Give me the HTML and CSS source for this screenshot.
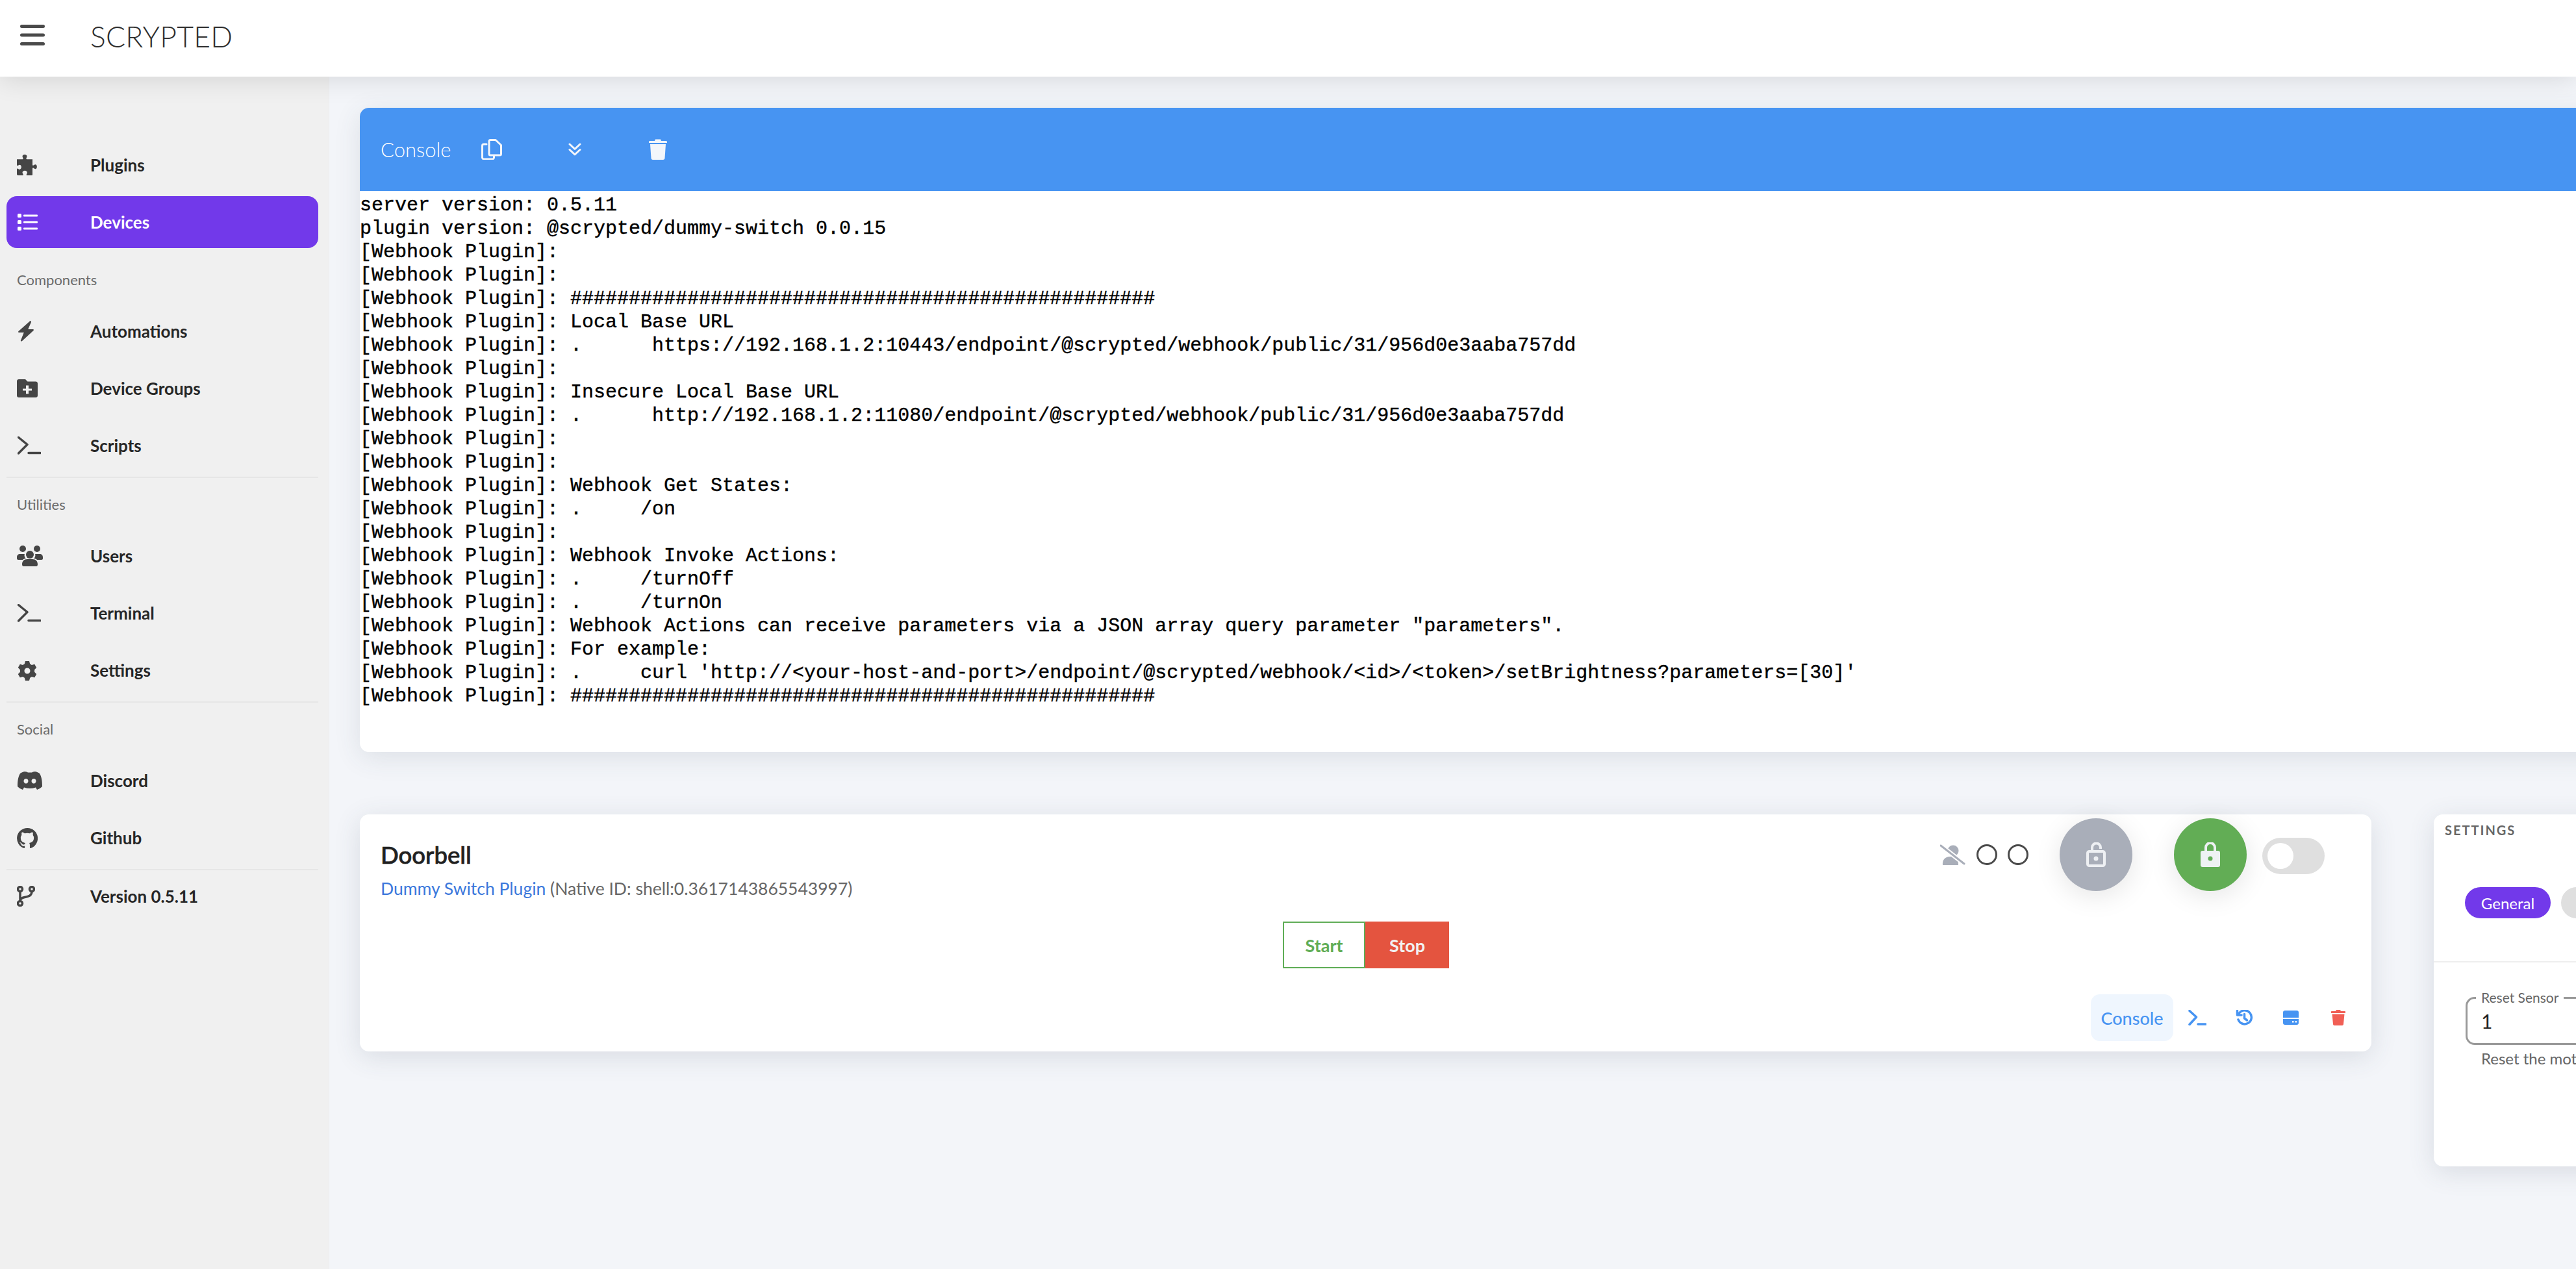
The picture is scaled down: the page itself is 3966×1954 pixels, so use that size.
FILE: index.html
```html
<!DOCTYPE html>
<html lang="en">
<head>
<meta charset="utf-8">
<title>Scrypted</title>
<link rel="stylesheet" href="styles.css">
</head>
<body>
<header class="topbar">
  <svg class="burger" viewBox="0 0 38 32"><path d="M2.500 2.500h33M2.500 16h33M2.500 29.500h33"/></svg>
  <div class="brand">SCRYPTED</div>
</header>
<div class="shell">
  <nav class="sidebar">
    <a class="item first"><span class="ico"><svg width="32" height="32" viewBox="0 0 28 24" preserveAspectRatio="none"><path d="M0 5.500h7c2 0 1.500-1.500.8-2.400C6.800 1.300 8.400 0 10.500 0s3.700 1.300 2.700 3.100c-.7.900-1.200 2.400.8 2.400h7v6c0 1.600 1.500 1.200 2.400.4 1.800-1.300 3.600-.2 3.600 2.100s-1.800 3.400-3.600 2.100c-.9-.8-2.400-1.200-2.400.4V23c0 .6-.4 1-1 1h-6c-1.600 0-1.300-1.200-.5-2.100 1.200-1.600-.3-3.400-2.800-3.400s-4 1.800-2.800 3.400c.8.900 1.100 2.100-.5 2.100H1.500C.6 24 0 23.400 0 22.500v-5.300c0-1.300 1.200-1.200 2.100-.5 1.700 1.300 3.900 0 3.900-2.200s-2.200-3.500-3.900-2.200c-.9.700-2.100.8-2.100-.5z"/></svg></span><span>Plugins</span></a>
    <a class="item active"><span class="ico"><svg width="32" height="26" viewBox="0 0 32 26"><rect x="1" y="0" width="6" height="6" rx="1.500"/><rect x="1" y="10" width="6" height="6" rx="1.500"/><rect x="1" y="20" width="6" height="6" rx="1.500"/><rect x="10" y="1.500" width="22" height="3" rx="1"/><rect x="10" y="11.500" width="22" height="3" rx="1"/><rect x="10" y="21.500" width="22" height="3" rx="1"/></svg></span><span>Devices</span></a>
    <div class="section">Components</div>
    <a class="item"><span class="ico"><svg class="nudge" width="26" height="32" viewBox="0 0 26 32"><path d="M19 0.500 1.500 16c-.8.800-.3 2 .8 2h7.500L5 30c-.5 1.300.8 2 1.800 1.200L24.500 15c.8-.8.300-2-.8-2h-7.500L21 2c.4-1.300-1-2.200-2-1.500z"/></svg></span><span>Automations</span></a>
    <a class="item"><span class="ico"><svg width="32" height="28" viewBox="0 0 32 28"><path fill-rule="evenodd" d="M3 0h10l3.500 3.500H29c1.700 0 3 1.300 3 3V25c0 1.700-1.300 3-3 3H3c-1.700 0-3-1.300-3-3V3c0-1.700 1.300-3 3-3zm11 9.500v5H9v3h5v5h4v-5h5v-3h-5v-5z"/></svg></span><span>Device Groups</span></a>
    <a class="item"><span class="ico"><svg class="strokeico nudge" width="36" height="28" viewBox="0 0 36 28"><path d="M1.500 1.500 15 12.500 1.500 26M17 25.500h18"/></svg></span><span>Scripts</span></a>
    <hr class="rule">
    <div class="section">Utilities</div>
    <a class="item"><span class="ico"><svg width="40" height="32" viewBox="0 0 40 32"><circle cx="9" cy="5" r="5"/><circle cx="31" cy="5" r="5"/><circle cx="20" cy="14" r="6"/><path d="M0 18c0-3 2-5 5-5h7c-1 2 0 6 2 7-3 0-4 1-5 2H2c-1 0-2-1-2-2zM40 18c0-3-2-5-5-5h-7c1 2 0 6-2 7 3 0 4 1 5 2h7c1 0 2-1 2-2zM8 29c0-5 3-8 8-8h8c5 0 8 3 8 8 0 2-1 3-2 3H10c-1 0-2-1-2-3z"/></svg></span><span>Users</span></a>
    <a class="item"><span class="ico"><svg class="strokeico nudge" width="36" height="28" viewBox="0 0 36 28"><path d="M1.500 1.500 15 12.500 1.500 26M17 25.500h18"/></svg></span><span>Terminal</span></a>
    <a class="item"><span class="ico"><svg class="nudge-s" width="30" height="32" viewBox="0 0 30 32"><path fill-rule="evenodd" d="M12 0h6l1.200 4.300 2.700 1.600 4.300-1.100 3 5.200-3.100 3.200v3.600l3.100 3.200-3 5.200-4.300-1.100-2.700 1.600L18 30h-6l-1.200-4.300-2.700-1.600-4.300 1.100-3-5.200 3.100-3.200v-3.600L.8 10l3-5.200 4.300 1.100 2.700-1.600zM15 10.500a4.500 4.500 0 1 0 0 9 4.500 4.500 0 0 0 0-9z" transform="translate(0 1)"/></svg></span><span>Settings</span></a>
    <hr class="rule">
    <div class="section">Social</div>
    <a class="item"><span class="ico"><svg class="nudge" width="38" height="28" viewBox="0 0 38 28"><path fill-rule="evenodd" d="M11 0c2 .2 4 .8 5 1.500h6C23 .8 25 .2 27 0c3 .5 5 1.500 7 3 3 5 4 11 4 20-2 2-5 4-8 5l-2-3.500c-6 2-12 2-18 0L8 28c-3-1-6-3-8-5 0-9 1-15 4-20 2-1.500 4-2.500 7-3zm2 11c-2 0-3.500 1.700-3.500 3.700s1.500 3.700 3.500 3.700 3.500-1.700 3.500-3.700S15 11 13 11zm12 0c-2 0-3.500 1.700-3.500 3.700s1.500 3.700 3.500 3.700 3.500-1.700 3.500-3.700S27 11 25 11z"/></svg></span><span>Discord</span></a>
    <a class="item"><span class="ico"><svg width="32" height="31" viewBox="0 0 16 15.600"><path d="M8 0a8 8 0 0 0-2.530 15.590c.4.070.55-.17.550-.38v-1.340c-2.230.48-2.700-1.070-2.700-1.070-.36-.93-.89-1.170-.89-1.170-.73-.5.050-.49.050-.49.800.06 1.230.83 1.230.83.710 1.220 1.870.87 2.320.66.070-.52.280-.87.510-1.070-1.780-.2-3.640-.89-3.640-3.950 0-.87.310-1.590.820-2.150-.08-.2-.36-1.020.08-2.120 0 0 .67-.21 2.200.82a7.600 7.600 0 0 1 4 0c1.530-1.040 2.200-.82 2.200-.82.44 1.100.16 1.920.08 2.120.51.560.820 1.270.820 2.150 0 3.070-1.870 3.750-3.650 3.950.29.250.54.730.54 1.480v2.200c0 .21.150.46.550.38A8 8 0 0 0 8 0z"/></svg></span><span>Github</span></a>
    <hr class="rule">
    <a class="item last"><span class="ico"><svg class="branch" width="28" height="32" viewBox="0 0 28 32"><circle cx="5" cy="5" r="3.500"/><circle cx="5" cy="27" r="3.500"/><circle cx="23" cy="5" r="3.500"/><path d="M5 8.500v15M23 8.500c0 7-6 8-11 9-4 .8-7 2-7 6"/></svg></span><span>Version 0.5.11</span></a>
  </nav>
  <main class="content">
    <section class="console">
      <div class="console-bar">
        <span class="console-title">Console</span>
        <svg class="c-copy" width="32" height="32" viewBox="0 0 32 32"><path class="line" d="M8 8H4a2.500 2.500 0 0 0-2.500 2.500v18A2.500 2.500 0 0 0 4 31h13a2.500 2.500 0 0 0 2.500-2.500V26"/><path class="line" d="M14 1.500h8l8.500 8V23a2 2 0 0 1-2 2H14a2 2 0 0 1-2-2V3.500a2 2 0 0 1 2-2z"/></svg>
        <svg class="c-down" width="20" height="20" viewBox="0 0 20 20"><path class="line" d="M2 2l8 7.500L18 2M2 10.500l8 7.500 8-7.500"/></svg>
        <svg class="c-trash" width="28" height="32" viewBox="0 0 28 32"><path fill="#f3f6fb" d="M1.500 3H9l1-2.500h8L19 3h7.500c.8 0 1.500.7 1.500 1.500V6H0V4.500C0 3.700.7 3 1.500 3zM2 8h24l-1.500 21.500c-.1 1.400-1.100 2.500-2.500 2.500H6c-1.400 0-2.400-1.100-2.500-2.500z"/></svg>
      </div>
      <pre class="log">server version: 0.5.11
plugin version: @scrypted/dummy-switch 0.0.15
[Webhook Plugin]: 
[Webhook Plugin]: 
[Webhook Plugin]: ##################################################
[Webhook Plugin]: Local Base URL
[Webhook Plugin]: .      https://192.168.1.2:10443/endpoint/@scrypted/webhook/public/31/956d0e3aaba757dd
[Webhook Plugin]: 
[Webhook Plugin]: Insecure Local Base URL
[Webhook Plugin]: .      http://192.168.1.2:11080/endpoint/@scrypted/webhook/public/31/956d0e3aaba757dd
[Webhook Plugin]: 
[Webhook Plugin]: 
[Webhook Plugin]: Webhook Get States:
[Webhook Plugin]: .     /on
[Webhook Plugin]: 
[Webhook Plugin]: Webhook Invoke Actions:
[Webhook Plugin]: .     /turnOff
[Webhook Plugin]: .     /turnOn
[Webhook Plugin]: Webhook Actions can receive parameters via a JSON array query parameter "parameters".
[Webhook Plugin]: For example:
[Webhook Plugin]: .     curl 'http://&lt;your-host-and-port&gt;/endpoint/@scrypted/webhook/&lt;id&gt;/&lt;token&gt;/setBrightness?parameters=[30]'
[Webhook Plugin]: ##################################################</pre>
    </section>
    <div class="cards">
      <section class="device">
        <div class="device-top">
          <div class="device-title">
            <h2>Doorbell</h2>
            <p><a>Dummy Switch Plugin</a> (Native ID: shell:0.3617143865543997)</p>
          </div>
          <div class="status">
            <svg class="s-person" width="40" height="32" viewBox="0 0 40 32"><circle cx="20" cy="10" r="8.500"/><path d="M4 32c-1-8 4-13 11-13h6c5 0 7 4 7 13z"/><path class="halo" d="M1 2l36 28"/><path class="slash" d="M1 2l36 28"/></svg>
            <span class="ring"></span>
            <span class="ring"></span>
            <span class="fab gray"><svg width="30" height="38" viewBox="0 0 30 38"><path class="lockline" d="M9 14V8a6.500 6.500 0 0 1 13 0v2"/><rect class="lockline" x="2" y="14" width="26" height="22" rx="2.500"/><circle cx="15" cy="25" r="3.500" fill="#eef0f3"/></svg></span>
            <span class="fab green"><svg width="30" height="38" viewBox="0 0 30 38"><path class="lockline" d="M8 16V8a7 7 0 0 1 14 0v8"/><rect x="0" y="13" width="30" height="25" rx="3" fill="#eef2f3"/><circle cx="15" cy="25" r="3.500" fill="#62ad55"/></svg></span>
            <span class="toggle"><span class="knob"></span></span>
          </div>
        </div>
        <div class="startstop"><button class="start">Start</button><button class="stop">Stop</button></div>
        <div class="actions">
          <button class="chip">Console</button>
          <svg class="a1" width="28" height="24" viewBox="0 0 28 24"><path d="M2 1.500 12.500 11 2 22.500M15 22h12"/></svg>
          <svg class="a2" width="28" height="24" viewBox="0 0 28 24"><path d="M6.500 5A10.500 10.500 0 1 1 5 15M3.500 1.500v6.500h6.500M14.500 6.500v6.500l4 3"/></svg>
          <svg class="a3" width="24" height="24" viewBox="0 0 24 24"><path fill="#4794f2" d="M3 1h18a3 3 0 0 1 3 3v8H0V4a3 3 0 0 1 3-3z"/><path fill="#4794f2" fill-rule="evenodd" d="M0 14h24v6a3 3 0 0 1-3 3H3a3 3 0 0 1-3-3zm14 3v2.500h2.500V17zm4.500 0v2.500H21V17z"/></svg>
          <svg class="a4" width="22" height="24" viewBox="0 0 22 24"><path fill="#f15f55" d="M1 2h6l1-2h6l1 2h6c.6 0 1 .4 1 1v2H0V3c0-.6.4-1 1-1zM1.500 6.500h19L19 22c-.1 1.200-1 2-2 2H5c-1 0-1.900-.8-2-2z"/></svg>
        </div>
      </section>
      <aside class="settings">
        <div class="settings-head">SETTINGS</div>
        <div class="tabs"><span class="pill on">General</span><span class="pill off"></span></div>
        <div class="field">
          <fieldset class="box"><legend>Reset Sensor</legend><span class="val">1</span></fieldset>
          <div class="hint">Reset the mot</div>
        </div>
      </aside>
    </div>
  </main>
</div>
</body>
</html>
```
FILE: styles.css
```css
* { box-sizing: border-box; }
html, body { margin: 0; height: 100%; }
body {
  width: 3966px; height: 1954px; overflow: hidden;
  font-family: Lato, "Noto Sans", sans-serif;
  background: #f3f5f9; color: #222;
  display: flex; flex-direction: column;
}
.topbar {
  height: 118px; flex: none; background: #fff;
  display: flex; align-items: center;
  position: relative; z-index: 3;
  box-shadow: 0 4px 40px rgba(0,0,0,.12);
}
.burger { width: 38px; height: 32px; margin: -10px 0 0 31px; fill: none; stroke: #4a4a4a; stroke-width: 5; stroke-linecap: round; }
.brand { margin: -8px 0 0 70px; font-size: 44.500px; font-weight: 300; color: #2e2e2e; letter-spacing: .2px; }
.shell { flex: 1; display: flex; min-height: 0; }
.sidebar {
  width: 506px; flex: none; background: #f0f0f0; padding: 0 16px 0 10px;
  box-shadow: 1px 0 0 #ebecef;
  display: flex; flex-direction: column;
}
.item {
  height: 80px; flex: none; display: flex; align-items: center;
  padding-left: 16px; border-radius: 16px;
  font-size: 26px; font-weight: 700; color: #262626;
  margin-bottom: 8px;
}
.item.first { margin-top: 96px; }
.item.last { margin-bottom: 0; }
.ico { width: 113px; flex: none; display: flex; align-items: center; }
.ico svg { fill: #454545; }
.ico svg.nudge { margin-left: 1px; }
.ico svg.nudge-s { margin: 2px 0 0 1px; }
.ico svg.strokeico { fill: none; stroke: #454545; stroke-width: 3.500; stroke-linecap: round; stroke-linejoin: round; }
.ico svg.branch { fill: none; stroke: #454545; stroke-width: 3.500; }
.item.active { background: #7239ea; color: #fff; }
.item.active .ico svg { fill: #fff; }
.section { height: 48px; margin: 16px 0; padding-left: 16px; font-size: 22px; color: #6b6b6b; display: flex; align-items: center; flex: none; }
.rule { width: 100%; height: 2px; background: #e6e6e6; border: 0; margin: 0; flex: none; }
.content { flex: 1; min-width: 0; overflow: hidden; padding: 48px 0 0 48px; }
.console {
  width: 3600px; height: 992px; border-radius: 14px 0 0 14px; background: #fff;
  box-shadow: 0 8px 40px rgba(60,70,90,.12); overflow: hidden;
}
.console-bar { height: 128px; background: #4794f2; display: flex; align-items: center; padding-left: 32px; }
.console-title { font-size: 31px; font-weight: 300; color: #fff; width: 155px; flex: none; }
.line { fill: none; stroke: #f3f6fb; stroke-width: 3; stroke-linejoin: round; stroke-linecap: round; }
.c-copy { flex: none; }
.c-down { margin-left: 102px; flex: none; }
.c-trash { margin-left: 104px; flex: none; }
.log {
  margin: 0; padding: 4px 0 0 0; font-family: "Liberation Mono", "Courier New", monospace;
  font-size: 30px; line-height: 36px; color: #000; -webkit-text-stroke: .4px #000; white-space: pre;
}
.cards { display: flex; align-items: flex-start; margin-top: 96px; }
.device {
  width: 3097px; height: 365px; flex: none; background: #fff; border-radius: 14px;
  box-shadow: 0 8px 40px rgba(60,70,90,.14); padding: 6px 0 0 32px; position: relative;
}
.device-top { display: flex; justify-content: space-between; }
.device-title h2 { margin: 34px 0 0; font-size: 36.500px; font-weight: 500; line-height: 44px; color: #212121; -webkit-text-stroke: .7px #212121; }
.device-title p { margin: 10px 0 0; font-size: 26.500px; line-height: 40px; color: #666; font-weight: 400; }
.device-title a { color: #3b78dc; }
.status { display: flex; align-items: flex-start; padding-right: 72px; }
.s-person { margin: 40px 0 0; fill: #a9aeb9; }
.s-person .halo { stroke: #fff; stroke-width: 7; fill: none; }
.s-person .slash { stroke: #a9aeb9; stroke-width: 3; fill: none; stroke-linecap: round; }
.ring { width: 32px; height: 32px; border-radius: 50%; border: 3px solid #4a4a4a; margin: 40px 0 0 16px; flex: none; }
.ring + .ring { margin-left: 16px; }
.fab { width: 112px; height: 112px; border-radius: 50%; display: flex; align-items: center; justify-content: center; flex: none; box-shadow: 0 8px 40px rgba(0,0,0,.10); }
.fab.gray { background: #a9aeb9; margin-left: 48px; }
.fab.green { background: #62ad55; margin-left: 64px; }
.fab svg { display: block; }
.lockline { fill: none; stroke: #eef0f3; stroke-width: 4; }
.toggle { width: 96px; height: 56px; border-radius: 28px; background: #dfdfdf; margin: 30px 0 0 24px; padding: 8px; flex: none; }
.knob { display: block; width: 40px; height: 40px; border-radius: 50%; background: #fff; }
.startstop { position: absolute; left: 1421px; top: 165px; display: flex; }
.startstop button { height: 72px; font: 700 27px Lato, sans-serif; padding: 0; }
.start { width: 127px; background: #fff; color: #5fad56; border: 2px solid #5fad56; }
.stop { width: 129px; background: #e4543f; color: #f2f2f2; border: 0; }
.actions { position: absolute; right: 0; bottom: 16px; height: 72px; display: flex; align-items: center; }
.chip { width: 127px; height: 72px; border: 0; border-radius: 14px; background: #eff6fe; color: #4794f2; font: 500 27px Lato, sans-serif; padding: 0; }
.actions svg { flex: none; }
.a1, .a2 { fill: none; stroke: #4794f2; stroke-width: 3.500; stroke-linecap: round; stroke-linejoin: round; }
.a1 { margin-left: 23px; }
.a2 { margin-left: 44px; }
.a3 { margin-left: 46px; }
.a4 { margin: 0 40px 0 50px; }
.settings {
  width: 400px; height: 542px; flex: none; margin-left: 96px; background: #fff; border-radius: 14px 0 0 14px;
  box-shadow: 0 8px 40px rgba(60,70,90,.14); overflow: hidden; position: relative;
}
.settings-head { padding: 10px 0 0 17px; font-size: 20px; font-weight: 700; color: #666; letter-spacing: 2px; line-height: 28px; }
.tabs { display: flex; gap: 16px; padding-left: 48px; margin-top: 74px; height: 116px; border-bottom: 2px solid #eee; width: 600px; }
.pill { width: 132px; height: 48px; border-radius: 24px; display: flex; align-items: center; justify-content: center; font-size: 24px; flex: none; }
.pill.on { background: #7239ea; color: #fff; }
.pill.off { background: #dfdfdf; }
.field { padding: 44px 0 0 49px; width: 900px; }
.box { margin: 0; padding: 0 0 0 21px; height: 83px; border: 3px solid #999; border-radius: 14px; position: relative; }
.box legend { padding: 0 8px; margin-left: -8px; font-size: 21px; line-height: 20px; color: #666; }
.val { display: block; font-size: 30px; line-height: 52px; color: #222; }
.hint { margin-top: 3px; padding-left: 24px; font-size: 24px; line-height: 36px; color: #666; white-space: nowrap; }
```
